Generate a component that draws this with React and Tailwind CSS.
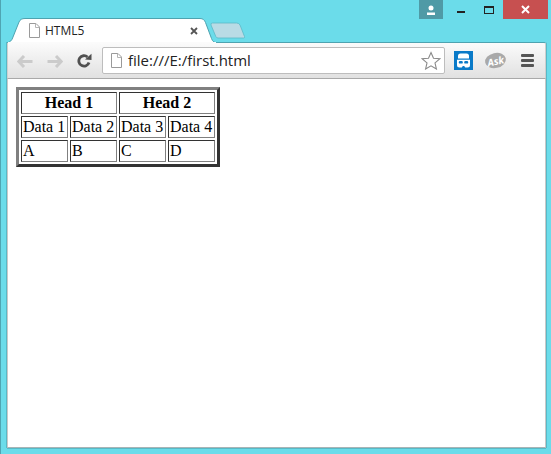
import React from 'react';

const PageIcon = () => (
  <svg width="13" height="15" viewBox="0 0 13 15" className="shrink-0">
    <path d="M1.5 .5h6.5l3.500 3.500v10.500h-10z" fill="#fff" stroke="#9a9a9a" />
    <path d="M7.500 .5v4h4" fill="none" stroke="#b5b5b5" />
  </svg>
);

const Arrow = ({ flip }) => (
  <svg width="16" height="13" viewBox="0 0 16 13" className={flip ? 'shrink-0 mt-[2px] -scale-x-100' : 'shrink-0 mt-[2px]'}>
    <path d="M7 1 1.800 6.500 7 12M2.500 6.500H15.500" fill="none" stroke="#cbcbcb" strokeWidth="3" />
  </svg>
);

const Tab = () => (
  <svg width="240" height="25" viewBox="0 0 240 25" className="absolute left-0 top-0">
    <path d="M205.500 5h24q2.500 0 3.500 2l4.500 11.500q.5 1.500-1 1.500h-25.500q-1.500 0-2.200-1.500L204 7q-.5-2 1.500-2z" fill="#b9dbe5" stroke="#5cb9c6" strokeWidth=".8" />
    <path
      d="M0 25c3-1 5-2.500 6-6l6-15C13 1.500 15 .5 18 .5h175c3 0 4.500 1.500 5.500 4l6 16c1 3 3 4.500 6.500 4.500z"
      fill="#fff"
      stroke="#4ea3b0"
    />
    <rect x="1" y="24" width="208" height="1" fill="#fbfbfb" />
  </svg>
);

const Star = () => (
  <svg width="20" height="19" viewBox="0 0 20 19" className="shrink-0">
    <path d="M10 1.500l2.500 5.700 6.200.6-4.700 4.100 1.400 6.100L10 14.800l-5.400 3.200L6 11.900 1.300 7.800l6.200-.6z" fill="#fff" stroke="#8a8a8a" strokeWidth="1.100" />
  </svg>
);

const BlueIcon = () => (
  <svg width="19" height="19" viewBox="0 0 19 19" className="shrink-0">
    <rect width="19" height="19" fill="#0a7ac8" />
    <path d="M4 7.500V5q0-2.500 2.500-2.500h6Q15 2.500 15 5v2.500z" fill="#fff" />
    <path d="M3 8.800h13V14q0 2.500-2.500 2.500h-2.300L10.200 15H8.800l-1 1.500H5.500Q3 16.500 3 14z" fill="#fff" />
    <rect x="4.800" y="10" width="4" height="2.600" rx="1.200" fill="#0a7ac8" />
    <rect x="10.200" y="10" width="4" height="2.600" rx="1.200" fill="#0a7ac8" />
  </svg>
);

const head = 'border border-t-[#333] border-l-[#333] border-b-[#808080] border-r-[#808080] p-px';
const cell = 'border border-t-[#333] border-l-[#333] border-b-[#808080] border-r-[#808080] p-px w-[47px]';
const rows = [
  ['Data 1', 'Data 2', 'Data 3', 'Data 4'],
  ['A', 'B', 'C', 'D'],
];

export default function App() {
  return (
    <div className="w-[551px] h-[454px] overflow-hidden flex flex-col bg-[#6bdcea] border-l border-[#4fa5b2]" style={{ fontFamily: '"Open Sans", sans-serif' }}>
      {/* window buttons */}
      <div className="h-[19px] flex justify-end shrink-0">
        <div className="w-6 bg-[#4f9aa6] flex items-center justify-center">
          <svg width="10" height="10" viewBox="0 0 10 10">
            <circle cx="5" cy="3" r="2.500" fill="#fff" />
            <path d="M1 7.500h8V10H1z" fill="#fff" />
          </svg>
        </div>
        <div className="w-[30px] ml-[3px] flex items-center justify-center">
          <div className="w-2 h-[2px] bg-[#222] mt-[5px]" />
        </div>
        <div className="w-[26px] flex items-center justify-center">
          <div className="w-[10px] h-[8px] border border-[#222] border-t-2" />
        </div>
        <div className="w-[45px] ml-px mr-[3px] bg-[#c75050] flex items-center justify-center">
          <svg width="9" height="9" viewBox="0 0 9 9">
            <path d="M1 1l7 7M8 1 1 8" stroke="#fff" strokeWidth="2" />
          </svg>
        </div>
      </div>

      {/* tab strip */}
      <div className="h-[24px] -mt-px shrink-0 relative ml-[6px] mr-[5px]">
        <Tab />
        <div className="relative flex items-center h-full pl-[21px] w-[191px] pt-[1px]">
          <PageIcon />
          <span className="ml-[4px] text-[12px] text-[#222]">HTML5</span>
          <svg width="8" height="8" viewBox="0 0 8 8" className="ml-auto">
            <path d="M1 1l6 6M7 1 1 7" stroke="#555" strokeWidth="1.800" />
          </svg>
        </div>
      </div>

      {/* toolbar */}
      <div className="ml-[6px] mr-[5px] h-[37px] shrink-0 flex items-center rounded-tr-[2px] border-t border-t-[#4ea3b0] border-b border-b-[#a9a9a9] border-x border-x-[#cfcfcf] shadow-[-1px_0_0_#58b9c6,1px_0_0_#58b9c6] bg-gradient-to-b from-[#fbfbfb] to-[#e1e1e1] pl-[9px] pr-[10px]">
        <Arrow />
        <div className="ml-[14px]"><Arrow flip /></div>
        <svg width="16" height="15" viewBox="0 0 16 15" className="ml-[13px] shrink-0">
          <path d="M13 9.500A5.200 5.200 0 1 1 11.500 4" fill="none" stroke="#505050" strokeWidth="2.800" />
          <path d="M9 6.500 15.500 .8v6.200z" fill="#505050" />
        </svg>
        <div className="ml-[10px] w-[343px] h-[27px] bg-white border border-[#bdbdbd] rounded-[2px] flex items-center pl-[7px] pr-[3px]">
          <PageIcon />
          <span className="ml-[5px] text-[15px] text-[#222]">file:///E:/first.html</span>
          <div className="ml-auto"><Star /></div>
        </div>
        <div className="ml-[9px]"><BlueIcon /></div>
        <div className="ml-[12px] w-[21px] h-[15px] rounded-[50%] bg-[#a9a9a9] flex items-center justify-center -rotate-12">
          <span className="text-[10px] leading-none font-bold italic text-white">Ask</span>
        </div>
        <div className="ml-[15px] w-[13px] flex flex-col gap-[2px]">
          <div className="h-[3px] bg-[#555] rounded-[1px]" />
          <div className="h-[3px] bg-[#555] rounded-[1px]" />
          <div className="h-[3px] bg-[#555] rounded-[1px]" />
        </div>
      </div>

      {/* page */}
      <div className="ml-[6px] mr-[5px] h-[369px] shrink-0 bg-white border-b border-b-[#a8b4b6] border-x border-x-[#c8c8c8] shadow-[-1px_0_0_#58b9c6,1px_0_0_#58b9c6,0_1px_0_#58b9c6] pl-2 pt-2">
        <table
          className="border-separate border-spacing-[2px] border-[3px] border-t-[#808080] border-l-[#808080] border-b-[#333] border-r-[#333] text-[16px] leading-[18px] text-black"
          style={{ fontFamily: '"Liberation Serif", serif' }}
        >
          <thead>
            <tr>
              <th colSpan={2} className={head}>Head 1</th>
              <th colSpan={2} className={head}>Head 2</th>
            </tr>
          </thead>
          <tbody>
            {rows.map((row) => (
              <tr key={row[0]}>
                {row.map((text) => (
                  <td key={text} className={cell}>{text}</td>
                ))}
              </tr>
            ))}
          </tbody>
        </table>
      </div>
    </div>
  );
}
